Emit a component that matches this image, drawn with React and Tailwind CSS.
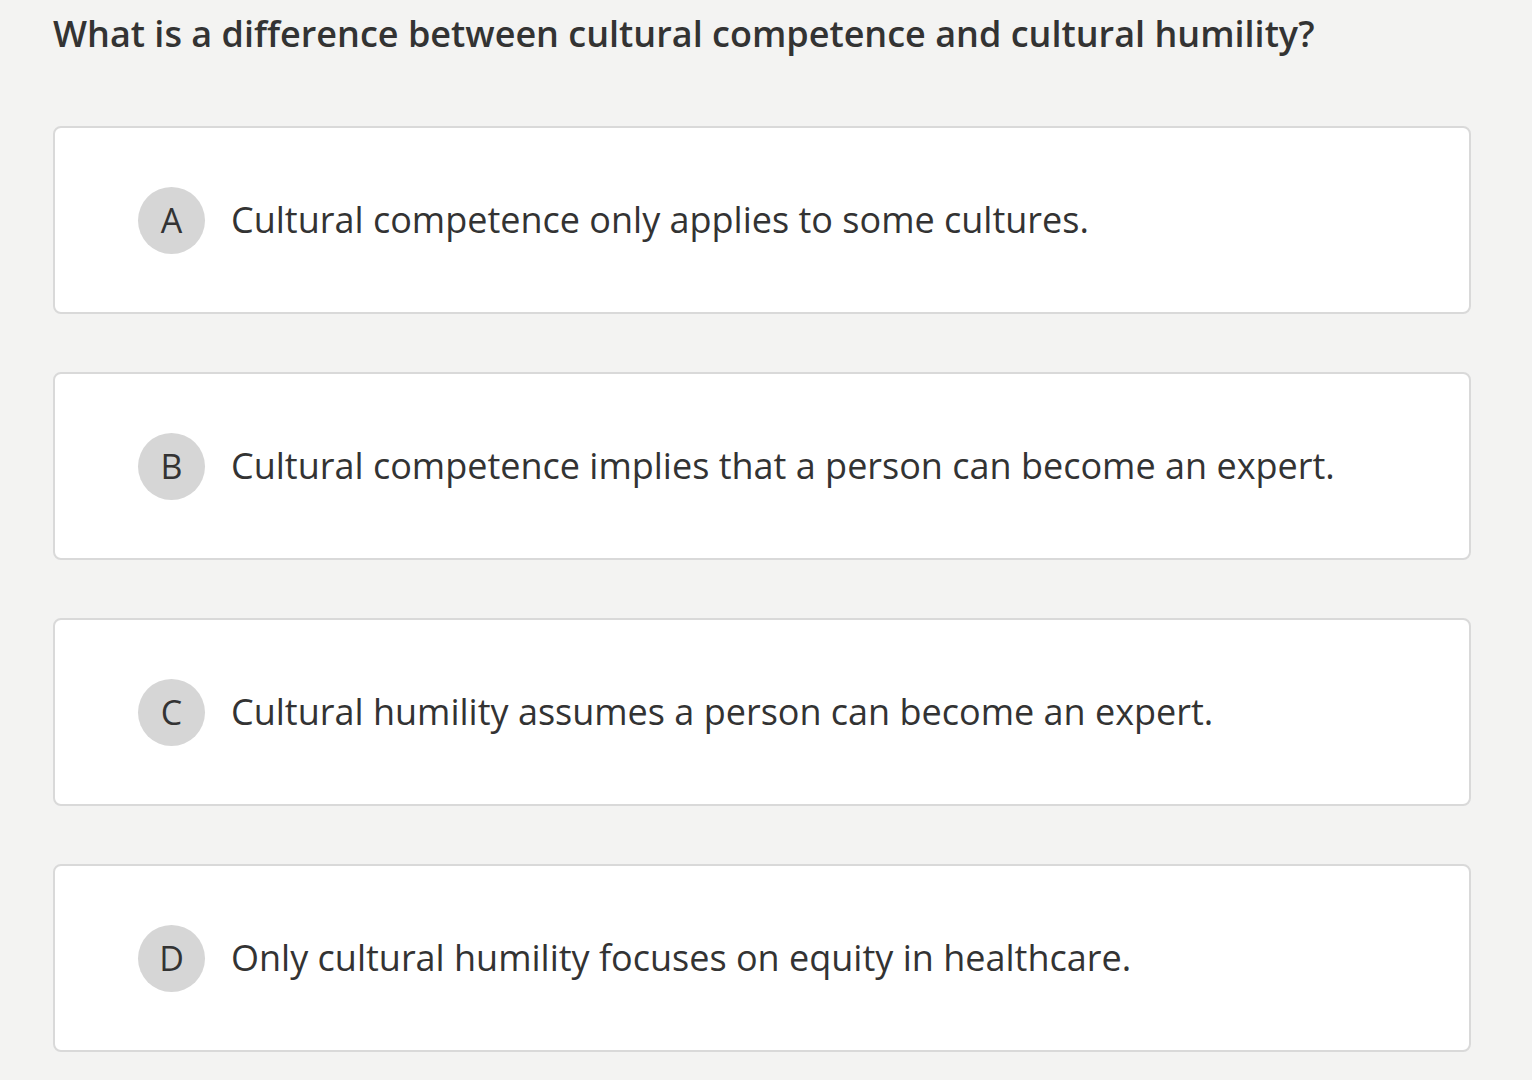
const options = [
  { letter: "A", text: "Cultural competence only applies to some cultures." },
  { letter: "B", text: "Cultural competence implies that a person can become an expert." },
  { letter: "C", text: "Cultural humility assumes a person can become an expert." },
  { letter: "D", text: "Only cultural humility focuses on equity in healthcare." },
];

function Option({ letter, text }) {
  return (
    <div className="flex h-[188px] items-center rounded-lg border-2 border-[#d9d9d9] bg-white pl-[83px]">
      <div className="flex h-[67px] w-[67px] shrink-0 items-center justify-center rounded-full bg-[#d6d6d6] text-[34px] text-[#333]">
        {letter}
      </div>
      <div className="ml-[26px] text-[36px] text-[#333]">{text}</div>
    </div>
  );
}

export default function App() {
  return (
    <div
      className="min-h-screen bg-[#f3f3f2] pl-[53px] pr-[61px] pt-[10px]"
      style={{ fontFamily: '"Open Sans", sans-serif' }}
    >
      <h1 className="text-[36px] font-semibold leading-[48px] text-[#333]">
        What is a difference between cultural competence and cultural humility?
      </h1>
      <div className="mt-[68px] flex flex-col gap-[58px]">
        {options.map((o) => (
          <Option key={o.letter} {...o} />
        ))}
      </div>
    </div>
  );
}
